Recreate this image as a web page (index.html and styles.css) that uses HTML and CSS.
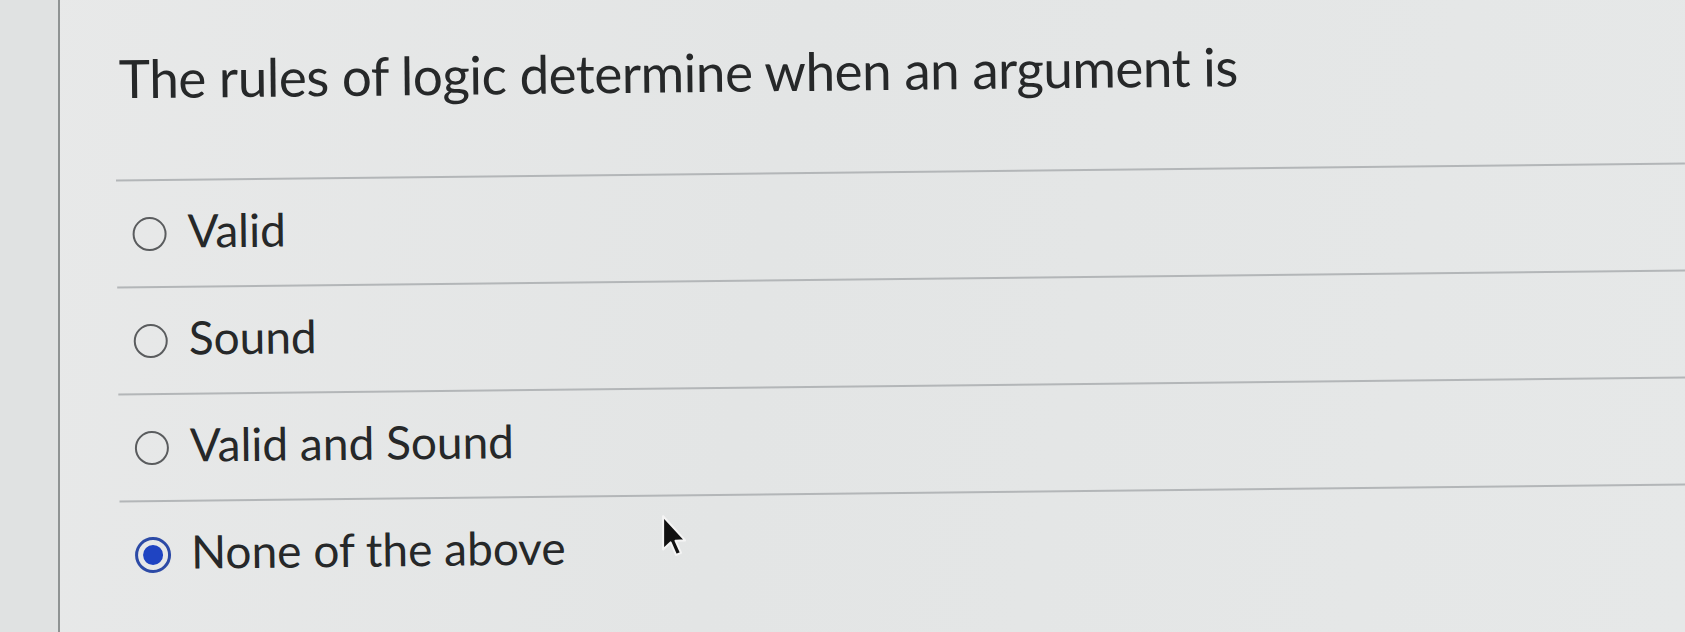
FILE: index.html
```html
<!DOCTYPE html>
<html lang="en">
<head>
  <meta charset="UTF-8">
  <meta name="viewport" content="width=device-width, initial-scale=1.0">
  <title>Question</title>
  <link rel="stylesheet" href="styles.css">
</head>
<body>
  <div class="page">
    <div class="gutter"></div>

    <div class="question">
      <h1 class="prompt">The rules of logic determine when an argument is</h1>
      <ul class="choices">
        <li class="choice"><span class="radio"></span><span class="label">Valid</span></li>
        <li class="choice"><span class="radio"></span><span class="label">Sound</span></li>
        <li class="choice"><span class="radio"></span><span class="label">Valid and Sound</span></li>
        <li class="choice"><span class="radio checked"></span><span class="label">None of the above</span></li>
      </ul>
    </div>

    <!-- mouse pointer -->
    <svg class="pointer" width="25" height="44" viewBox="0 0 12 21">
      <path d="M1 1 L1 17 L4.6 13.6 L7.2 19.6 L9.6 18.6 L7 12.8 L11.6 12.6 Z" fill="#111" stroke="#f4f4f4" stroke-width="1" stroke-linejoin="round"/>
    </svg>
  </div>
</body>
</html>
```

FILE: styles.css
```css
html, body {
  margin: 0;
  height: 100%;
  overflow: hidden;
}
body {
  font-family: Lato, 'Open Sans', sans-serif;
  background-color: #e4e6e6;
  color: #262829;
}
.page {
  position: relative;
  display: flex;
  height: 100%;
  background: linear-gradient(100deg, #e8e9e9 0%, #e3e5e5 45%, #e6e8e8 100%);
}
.gutter {
  width: 58px;
  flex-shrink: 0;
  background-color: #e0e2e2;
  border-right: 2px solid #8f9393;
}
.question {
  flex: 1;
  padding-left: 56px;
  transform: rotate(-0.62deg);
  transform-origin: 0 180px;
}
.prompt {
  margin: 52px 0 75px 4px;
  font-size: 53px;
  line-height: 53px;
  font-weight: 400;
  letter-spacing: -0.5px;
  white-space: nowrap;
}
.choices {
  list-style: none;
  margin: 0;
  padding: 0;
}
.choice {
  display: flex;
  align-items: center;
  height: 105px;
  border-top: 2px solid #b3b6b8;
  font-size: 46px;
}
.radio {
  width: 34px;
  height: 34px;
  box-sizing: border-box;
  margin-left: 16px;
  margin-right: 21px;
  border: 2px solid #5a5c5e;
  border-radius: 50%;
  flex-shrink: 0;
}
.radio.checked {
  width: 36px;
  height: 36px;
  margin-left: 15px;
  margin-right: 20px;
  border: 3px solid #2c4aa6;
  padding: 5px;
  background-color: #1f44c2;
  background-clip: content-box;
  box-shadow: 0 0 0 1px #e4e6e6;
}
.label {
  position: relative;
  top: -3px;
}
.pointer {
  position: absolute;
  left: 661px;
  top: 514px;
}
```
